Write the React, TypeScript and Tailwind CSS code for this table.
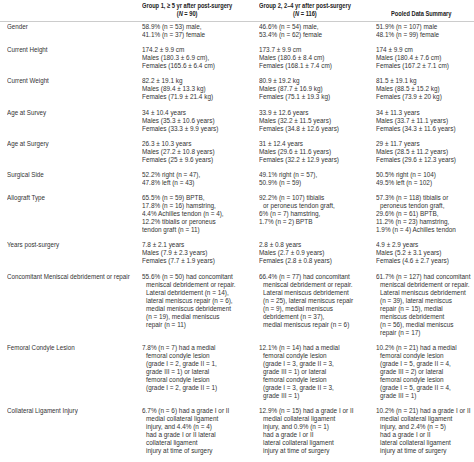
type Row = { label: string; cells: string[][]; indent?: boolean };

// lines starting with "~" get the small hanging indent of the printed table
const rows: Row[] = [
  {
    label: "Gender",
    cells: [
      ["58.9% (n = 53) male,", "41.1% (n = 37) female"],
      ["46.6% (n = 54) male,", "53.4% (n = 62) female"],
      ["51.9% (n = 107) male", "48.1% (n = 99) female"],
    ],
  },
  {
    label: "Current Height",
    cells: [
      ["174.2 ± 9.9 cm", "Males (180.3 ± 6.9 cm),", "Females (165.6 ± 6.4 cm)"],
      ["173.7 ± 9.9 cm", "Males (180.6 ± 8.4 cm)", "Females (168.1 ± 7.4 cm)"],
      ["174 ± 9.9 cm", "Males (180.4 ± 7.6 cm)", "Females (167.2 ± 7.1 cm)"],
    ],
  },
  {
    label: "Current Weight",
    cells: [
      ["82.2 ± 19.1 kg", "Males (89.4 ± 13.3 kg)", "Females (71.9 ± 21.4 kg)"],
      ["80.9 ± 19.2 kg", "Males (87.7 ± 16.9 kg)", "Females (75.1 ± 19.3 kg)"],
      ["81.5 ± 19.1 kg", "Males (88.5 ± 15.2 kg)", "Females (73.9 ± 20 kg)"],
    ],
  },
  {
    label: "Age at Survey",
    cells: [
      ["34 ± 10.4 years", "Males (35.3 ± 10.6 years)", "Females (33.3 ± 9.9 years)"],
      ["33.9 ± 12.6 years", "Males (32.2 ± 11.5 years)", "Females (34.8 ± 12.6 years)"],
      ["34 ± 11.3 years", "Males (33.7 ± 11.1 years)", "Females (34.3 ± 11.6 years)"],
    ],
  },
  {
    label: "Age at Surgery",
    cells: [
      ["26.3 ± 10.3 years", "Males (27.2 ± 10.8 years)", "Females (25 ± 9.6 years)"],
      ["31 ± 12.4 years", "Males (29.6 ± 11.6 years)", "Females (32.2 ± 12.9 years)"],
      ["29 ± 11.7 years", "Males (28.5 ± 11.2 years)", "Females (29.6 ± 12.3 years)"],
    ],
  },
  {
    label: "Surgical Side",
    cells: [
      ["52.2% right (n = 47),", "47.8% left (n = 43)"],
      ["49.1% right (n = 57),", "50.9% (n = 59)"],
      ["50.5% right (n = 104)", "49.5% left (n = 102)"],
    ],
  },
  {
    label: "Allograft Type",
    cells: [
      ["65.5% (n = 59) BPTB,", "17.8% (n = 16) hamstring,", "4.4% Achilles tendon (n = 4),", "12.2% tibialis or peroneus", "tendon graft (n = 11)"],
      ["92.2% (n = 107) tibialis", "~or peroneus tendon graft,", "6% (n = 7) hamstring,", "1.7% (n = 2) BPTB"],
      ["57.3% (n = 118) tibialis or", "~peroneus tendon graft,", "29.6% (n = 61) BPTB,", "11.2% (n = 23) hamstring,", "1.9% (n = 4) Achilles tendon"],
    ],
  },
  {
    label: "Years post-surgery",
    cells: [
      ["7.8 ± 2.1 years", "Males (7.9 ± 2.3 years)", "Females (7.7 ± 1.9 years)"],
      ["2.8 ± 0.8 years", "Males (2.7 ± 0.9 years)", "Females (2.8 ± 0.8 years)"],
      ["4.9 ± 2.9 years", "Males (5.2 ± 3.1 years)", "Females (4.6 ± 2.7 years)"],
    ],
  },
  {
    label: "Concomitant Meniscal debridement or repair",
    indent: true,
    cells: [
      ["55.6% (n = 50) had concomitant", "meniscal debridement or repair.", "Lateral debridement (n = 14),", "lateral meniscus repair (n = 6),", "medial meniscus debridement", "(n = 19), medial meniscus", "repair (n = 11)"],
      ["66.4% (n = 77) had concomitant", "meniscal debridement or repair.", "Lateral meniscus debridement", "(n = 25), lateral meniscus repair", "(n = 9), medial meniscus", "debridement (n = 37),", "medial meniscus repair (n = 6)"],
      ["61.7% (n = 127) had concomitant", "meniscal debridement or repair.", "Lateral meniscus debridement", "(n = 39), lateral meniscus", "repair (n = 15), medial", "meniscus debridement", "(n = 56), medial meniscus", "repair (n = 17)"],
    ],
  },
  {
    label: "Femoral Condyle Lesion",
    indent: true,
    cells: [
      ["7.8% (n = 7) had a medial", "femoral condyle lesion", "(grade I = 2, grade II = 1,", "grade III = 1) or lateral", "femoral condyle lesion", "(grade I = 2, grade II = 1)"],
      ["12.1% (n = 14) had a medial", "femoral condyle lesion", "(grade I = 3, grade II = 3,", "grade III = 1) or lateral", "femoral condyle lesion", "(grade I = 3, grade II = 3,", "grade III = 1)"],
      ["10.2% (n = 21) had a medial", "femoral condyle lesion", "(grade I = 5, grade II = 4,", "grade III = 2) or lateral", "femoral condyle lesion", "(grade I = 5, grade II = 4,", "grade III = 1)"],
    ],
  },
  {
    label: "Collateral Ligament Injury",
    indent: true,
    cells: [
      ["6.7% (n = 6) had a grade I or II", "medial collateral ligament", "injury, and 4.4% (n = 4)", "had a grade I or II lateral", "collateral ligament", "injury at time of surgery"],
      ["12.9% (n = 15) had a grade I or II", "medial collateral ligament", "injury, and 0.9% (n = 1)", "had a grade I or II", "lateral collateral ligament", "injury at time of surgery"],
      ["10.2% (n = 21) had a grade I or II", "medial collateral ligament", "injury, and 2.4% (n = 5)", "had a grade I or II", "lateral collateral ligament", "injury at time of surgery"],
    ],
  },
];

// no condensed face is installed, so Arial-width text is squeezed horizontally
const font = { fontFamily: '"Liberation Sans", Arial, sans-serif' };

function Cell({ lines, indent }: { lines: string[]; indent?: boolean }) {
  return (
    <div className="origin-top-left scale-x-[0.8]">
      {lines.map((line, i) => {
        const hang = line.startsWith("~") || (indent && i > 0);
        return (
          <div key={i} className={hang ? "pl-[5px] whitespace-nowrap" : "whitespace-nowrap"}>
            {line.replace(/^~/, "")}
          </div>
        );
      })}
    </div>
  );
}

export default function App() {
  return (
    <div className="w-[474px] h-[462px] overflow-hidden bg-white text-[#333333] text-[8px] leading-[8px]" style={font}>
      {/* header */}
      <div className="grid grid-cols-[135px_117px_117px_1fr] pl-[7px] pt-[2px] pb-[3px] border-b border-[#cccccc] font-bold text-[7.5px] text-[#222222]">
        <div />
        <div className="origin-top-left scale-x-[0.76] justify-self-start text-center whitespace-nowrap">
          <div>Group 1, ≥ 5 yr after post-surgery</div>
          <div>
            (<span className="italic">N</span> = 90)
          </div>
        </div>
        <div className="origin-top-left scale-x-[0.76] justify-self-start text-center whitespace-nowrap">
          <div>Group 2, 2–4 yr after post-surgery</div>
          <div>
            (<span className="italic">N</span> = 116)
          </div>
        </div>
        <div className="flex items-end pl-[15px]">
          <div className="origin-bottom-left scale-x-[0.76] whitespace-nowrap">Pooled Data Summary</div>
        </div>
      </div>

      {/* body */}
      <div className="flex flex-col pt-[1px]">
        {rows.map((row) => (
          <div key={row.label} className="grid grid-cols-[135px_117px_117px_1fr] pl-[7px] pb-[7.2px]">
            <div className="origin-top-left scale-x-[0.78] whitespace-nowrap">{row.label}</div>
            {row.cells.map((c, i) => (
              <Cell key={i} lines={c} indent={row.indent} />
            ))}
          </div>
        ))}
      </div>
    </div>
  );
}
